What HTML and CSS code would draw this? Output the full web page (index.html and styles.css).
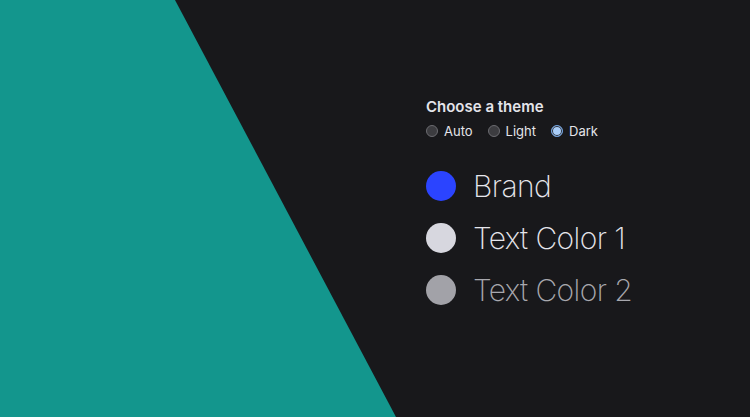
FILE: index.html
```html
<!DOCTYPE html>
<html lang="en">
<head>
  <meta charset="UTF-8" />
  <meta name="viewport" content="width=device-width, initial-scale=1" />
  <title>Theme colors</title>
  <link rel="stylesheet" href="styles.css">
</head>
<body>

<div class="backdrop" aria-hidden="true"></div>

<main class="panel">
  <!-- Theme picker -->
  <fieldset class="theme-picker">
    <legend>Choose a theme</legend>
    <label><input type="radio" name="theme" value="auto" /> Auto</label>
    <label><input type="radio" name="theme" value="light" /> Light</label>
    <label><input type="radio" name="theme" value="dark" checked /> Dark</label>
  </fieldset>

  <!-- Colour swatches -->
  <ul class="swatches">
    <li><span class="dot brand"></span><span class="name">Brand</span></li>
    <li><span class="dot text-1"></span><span class="name">Text Color 1</span></li>
    <li><span class="dot text-2"></span><span class="name text-2-label">Text Color 2</span></li>
  </ul>
</main>

</body>
</html>
```

FILE: styles.css
```css
body {
  margin: 0; padding: 0;
  font-family: Inter, 'Noto Sans', sans-serif;
  background: #18181b;
  color: #dfdfe5;
  width: 750px;
  height: 417px;
  overflow: hidden;
  position: relative;
}
.backdrop {
  position: absolute;
  inset: 0;
  background: #13968d;
  clip-path: polygon(0 0, 175px 0, 396px 417px, 0 417px);
}
.panel {
  position: relative;
  padding: 97px 0 0 426px;
}
.theme-picker {
  border: none;
  margin: 0;
  padding: 0;
  display: flex;
  align-items: center;
  gap: 15px;
  font-size: 13px;
  color: #e4e4ea;
}
.theme-picker legend {
  padding: 0;
  font-size: 15px;
  font-weight: 600;
  color: #e4e4ea;
  margin-bottom: 7px;
}
.theme-picker label {
  display: flex;
  align-items: center;
  gap: 6px;
}
.theme-picker input {
  appearance: none;
  margin: 0;
  width: 12px;
  height: 12px;
  border-radius: 50%;
  border: 1px solid #6b6b70;
  background: #3c3c40;
}
.theme-picker input:checked {
  border-color: #6e9fdc;
  background: #a9cdf8;
  box-shadow: inset 0 0 0 1px #2a2a2e;
}
.swatches {
  list-style: none;
  margin: 0;
  padding: 0;
  margin-top: 32px;
  display: flex;
  flex-direction: column;
  gap: 22px;
}
.swatches li {
  display: flex;
  align-items: center;
  gap: 17px;
  height: 30px;
}
.dot {
  width: 30px;
  height: 30px;
  border-radius: 50%;
}
.dot.brand { background: #2b44ff; }
.dot.text-1 { background: #d7d7df; }
.dot.text-2 { background: #a2a2a8; }
.name {
  font-size: 30px;
  font-weight: 200;
  letter-spacing: -0.6px;
  color: #e6e6ec;
}
.text-2-label { color: #a8a8ae; }
```
